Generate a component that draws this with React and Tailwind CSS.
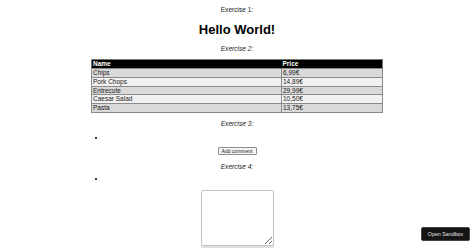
const menu = [
  { name: "Chips", price: "6,99€" },
  { name: "Pork Chops", price: "14,89€" },
  { name: "Entrecote", price: "29,99€" },
  { name: "Caesar Salad", price: "10,50€" },
  { name: "Pasta", price: "13,75€" },
];

const App = () => {
  return (
    <div className="relative h-[248px] w-[474px] overflow-hidden bg-white font-['Liberation_Sans',Arial,sans-serif] text-black">
      <div className="flex flex-col items-center pt-[6px]">
        <p className="text-[6.6px] leading-[8px] text-[#222]">Exercise 1:</p>

        <h1 className="mt-[8px] text-[13px] font-bold leading-[15px]">Hello World!</h1>

        <p className="mt-[8px] text-[6.6px] italic leading-[8px] text-[#222]">Exercise 2:</p>

        <table className="mt-[6px] w-[292px] border-collapse border border-[#777] text-[6.5px] leading-[7.6px]">
          <thead>
            <tr className="bg-black text-white">
              <th className="h-[9px] w-[190px] p-0 pl-[1px] text-left font-bold">Name</th>
              <th className="h-[9px] p-0 pl-[1px] text-left font-bold">Price</th>
            </tr>
          </thead>
          <tbody>
            {menu.map((item, index) => (
              <tr key={index} className={index % 2 === 0 ? "bg-[#d9d9d9]" : "bg-[#f1f1f1]"}>
                <td className="h-[8.75px] border border-[#8a8a8a] p-0 pl-[1px] text-[#1a1a1a]">{item.name}</td>
                <td className="h-[8.75px] border border-[#8a8a8a] p-0 pl-[1px] text-[#1a1a1a]">{item.price}</td>
              </tr>
            ))}
          </tbody>
        </table>

        <p className="mt-[7px] text-[6.6px] italic leading-[8px] text-[#222]">Exercise 3:</p>
      </div>

      <ul className="mt-[6px] list-disc pl-[106px] text-[6.6px] leading-[8px]">
        <li>&nbsp;</li>
      </ul>

      <div className="flex flex-col items-center">
        <button className="mt-[5px] h-[8px] w-[39px] rounded-[1px] border border-[#8f8f8f] bg-[#f4f4f4] p-0 text-[5px] leading-[6px] text-[#222]">
          Add comment
        </button>

        <p className="mt-[8px] text-[6.6px] italic leading-[8px] text-[#222]">Exercise 4:</p>
      </div>

      <ul className="mt-[4px] list-disc pl-[106px] text-[6.6px] leading-[8px]">
        <li>&nbsp;</li>
      </ul>

      <div className="flex justify-center">
        <textarea className="mt-[7px] ml-[1px] h-[56px] w-[73px] rounded-[2px] border border-[#c4c4c4] bg-white text-[6px] shadow-[0_2px_1px_#dcdcdc]" />
      </div>

      <button className="absolute bottom-[7px] right-[4px] h-[14px] w-[49px] rounded-[2px] border border-[#444] bg-[#151515] text-[5.3px] leading-[12px] text-[#e8e8e8]">
        Open Sandbox
      </button>
    </div>
  );
};

export default App;
